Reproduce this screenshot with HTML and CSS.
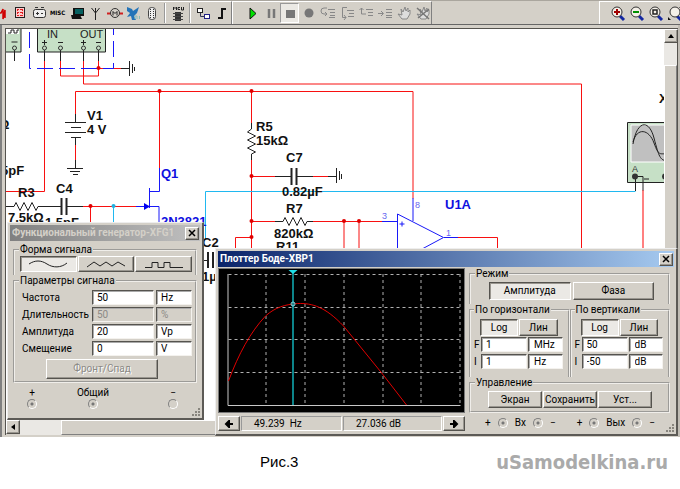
FILE: index.html
```html
<!DOCTYPE html>
<html lang="ru">
<head>
<meta charset="utf-8">
<title>Плоттер Боде</title>
<link rel="stylesheet" href="styles.css">
</head>
<body>
<main class="app">
  <header class="toolbar">
    <div class="band components">
      <button class="tool cut" aria-label="Аналоговые"><svg viewBox="0 0 10 18"><path d="M0 9h1l2-4v10l2-9v8" stroke="#d00000" stroke-width="1.5" fill="none"/></svg></button>
      <button class="tool" aria-label="Индикаторы"><svg viewBox="0 0 18 18"><rect x="4.500" y="3.500" width="9" height="10" fill="#fcc" stroke="#222"/><path d="M6 5.500h6M6 8.500h6M6 11.500h6M6.500 5v7M11.500 5v7" stroke="#e02020" stroke-dasharray="2 1"/></svg></button>
      <button class="tool" aria-label="Питание"><svg viewBox="0 0 18 18"><rect x="3.500" y="5.500" width="12" height="8" rx="2" fill="#eee" stroke="#333"/><path d="M5 3.500h3M11 3.500h3M6 9.500h3M7.500 8v3M11 9.500h2" stroke="#333"/></svg></button>
      <button class="tool misc" aria-label="Разное">MISC</button>
      <button class="tool" aria-label="Периферия"><svg viewBox="0 0 18 18"><rect x="5" y="4" width="11" height="8" fill="#111"/><rect x="7" y="5" width="8" height="5" fill="#066060"/><path d="M3 11h9l2 4H4z" fill="#111"/></svg></button>
      <button class="tool" aria-label="Радио"><svg viewBox="0 0 18 18"><path d="M4.500 4l4 5 4-5M8.500 4v12" stroke="#222" fill="none"/></svg></button>
      <button class="tool" aria-label="Электромеханика"><svg viewBox="0 0 18 18"><path d="M1 9.500h4M13 9.500h4" stroke="#d02020" stroke-width="2"/><circle cx="9" cy="9" r="4.500" fill="#d4d0c8" stroke="#333"/><path d="M7 11.500v-4l2 2 2-2v4" stroke="#222" fill="none"/></svg></button>
      <button class="tool" aria-label="NI"><svg viewBox="0 0 18 18"><path d="M2 3l5 2 1 2 6-4-2 6-3 3 2 4H7l-1-4-4 1 3-4-3-2z" fill="#2474b8"/><path d="M10 15v-3h2v3M14.500 12v3" stroke="#8bb" fill="none"/></svg></button>
      <button class="tool" aria-label="Разъёмы"><svg viewBox="0 0 18 18"><rect x="4.500" y="3.500" width="7" height="12" rx="3" fill="#eee" stroke="#444"/><path d="M6.500 5v9M9.500 5v9" stroke="#333" stroke-dasharray="1 1"/></svg></button>
      <span class="sep"></span>
      <button class="tool" aria-label="MCU"><svg viewBox="0 0 18 18"><path d="M4.500 6V3l1.500 1.500L7.500 3v3M11 3.500H9v2h2M12.500 3v3h2V3" stroke="#222" fill="none"/><rect x="6" y="8" width="6" height="9" fill="#333"/><path d="M4 9.500h10M4 12.500h10M4 15.500h10" stroke="#444"/></svg></button>
      <span class="sep"></span>
      <button class="tool" aria-label="Иерархический блок"><svg viewBox="0 0 18 18"><rect x="3.500" y="4.500" width="5" height="4" fill="#fff" stroke="#222"/><rect x="10.500" y="10.500" width="5" height="4" fill="#fff" stroke="#228"/><path d="M6.500 9v3.500h4" fill="none" stroke="#335"/></svg></button>
      <button class="tool" aria-label="Шина"><svg viewBox="0 0 18 18"><path d="M5 14h4V5h4" fill="none" stroke="#111" stroke-width="2"/></svg></button>
    </div>
    <div class="band simulate">
      <button class="tool" aria-label="Пуск"><svg viewBox="0 0 18 18"><path d="M7 4v11l6-5.500z" fill="#00e000" stroke="#111"/></svg></button>
      <button class="tool" aria-label="Пауза"><svg viewBox="0 0 18 18"><path d="M7 5v9M12 5v9" stroke="#777" stroke-width="2.500"/></svg></button>
      <button class="tool pressed" aria-label="Стоп"><svg viewBox="0 0 18 18"><rect x="5" y="6" width="9" height="8" fill="#777"/></svg></button>
      <button class="tool" aria-label="Запись"><svg viewBox="0 0 18 18"><circle cx="9" cy="9" r="4.500" fill="#777"/></svg></button>
      <button class="tool" aria-label="Шаг внутрь"><svg viewBox="0 0 18 18"><path d="M8 4H5a3 3 0 0 0 0 6h3M6 8l2 2-2 2M9 5.500h7M11 8.500h5M11 11.500h5M10 13.500h6" stroke="#888" fill="none"/></svg></button>
      <button class="tool" aria-label="Шаг через"><svg viewBox="0 0 18 18"><path d="M9 3.500H4.500v10H8M6 11l2 2.500L6 16M9 6.500h7M11 9.500h5M10 12.500h6" stroke="#888" fill="none"/></svg></button>
      <button class="tool" aria-label="Шаг наружу"><svg viewBox="0 0 18 18"><path d="M4.500 4v6H9M2.500 6l2-2 2 2M9 5.500h7M11 8.500h5M11 11.500h5" stroke="#888" fill="none"/></svg></button>
      <button class="tool" aria-label="До курсора"><svg viewBox="0 0 18 18"><path d="M2 9.500h5M5 7l2.500 2.500L5 12M10 5.500h6M10 8.500h6M10 11.500h6M10 13.500h6" stroke="#888" fill="none"/></svg></button>
      <button class="tool" aria-label="Точка останова"><svg viewBox="0 0 18 18"><path d="M3 10l4 5h5l3-5V6l-2 2V4l-2 3-1-4-2 5-2-3 1 6z" fill="#ddd" stroke="#888"/></svg></button>
      <button class="tool" aria-label="Снять точки"><svg viewBox="0 0 18 18"><path d="M3 10l4 5h5l3-5V6l-2 2V4l-2 3-1-4-2 5-2-3 1 6z" fill="#ddd" stroke="#888"/><path d="M3 4l12 11M15 5L4 14" stroke="#777" stroke-width="1.500"/></svg></button>
    </div>
    <div class="band zooming">
      <button class="tool" aria-label="Увеличить"><svg viewBox="0 0 18 18"><path d="M11 12l4 4" stroke="#1428a0" stroke-width="3"/><circle cx="8" cy="8" r="5" fill="#f4f0e8" stroke="#333"/><path d="M5 8h6M8 5v6" stroke="#a00000" stroke-width="2"/></svg></button>
      <button class="tool" aria-label="Уменьшить"><svg viewBox="0 0 18 18"><path d="M11 12l4 4" stroke="#1428a0" stroke-width="3"/><circle cx="8" cy="8" r="5" fill="#f4f0e8" stroke="#333"/><path d="M5 8h6" stroke="#009000" stroke-width="2"/></svg></button>
      <button class="tool" aria-label="Область"><svg viewBox="0 0 18 18"><path d="M11 12l4 4" stroke="#1428a0" stroke-width="3"/><circle cx="8" cy="8" r="5" fill="#f4f0e8" stroke="#333"/><rect x="6" y="6" width="4" height="4" fill="none" stroke="#222" stroke-width="1.500"/></svg></button>
      <button class="tool" aria-label="Весь лист"><svg viewBox="0 0 18 18"><path d="M11 12l4 4" stroke="#1428a0" stroke-width="3"/><circle cx="9" cy="8" r="5" fill="#f4f0e8" stroke="#333"/><path d="M2 13v3h3z" fill="#111"/><path d="M13 3h4v4z" fill="#111"/></svg></button>
    </div>
  </header>

  <section class="workspace">
    <div class="sheet">
      <svg class="schematic" width="658" height="392" viewBox="6 29 658 392" fill="none" role="img" aria-label="Схема">
        <g fill="#c6e0c6" stroke="#222">
          <path d="M5.500 20.500h15.500v31.500H5.500z"/>
          <path d="M37.500 20.500h68v31.500h-68z"/>
          <path d="M627.500 122.500h50v60h-50z"/>
        </g>
        <path d="M6 29h13v5H6z" fill="#fff"/>
        <path class="k" d="M8 33h3v-3h3v3h3v-3h2"/>
        <path d="M631 125h40v37h-40z" fill="#c0c0c0" stroke="#fff"/>
        <path class="k" d="M633 144C637 120 649 119 654 138S660 160 667 161M633 142C637 127 649 129 654 143S660 153 667 154"/>
        <g class="red">
          <path d="M44.500 61v130.500H6M60.500 61v15h38V61M98.500 68.500h23M83.500 61v23h498v164"/>
          <path d="M75.500 114V91.500h337.500v107M75.500 145v15M159.500 91v77M251.500 91v32M251.500 160v88M251 176.500h24M313 176.500h15M251 221.500h24M313 221.500h69M344 221v27M359 221v27M251 237.500h-15.500V248M458 237.500h39.500V248M83 206.500h53M90.500 206v18"/>
        </g>
        <path d="M643 190v58" stroke="#ff8080" stroke-width="2"/>
        <path class="cyan" d="M113.500 206v18M205.500 240v-48.500h430"/>
        <path class="blue dash" d="M29.500 32v36.500h84V29"/>
        <path class="blue" d="M159.500 168v23.500h-10M149.500 188v20M136 206.500h23V224M413 198v23M382 221.500h15M397.500 252v-38l46 23.500-28 15M444 237.500h14M399.500 224h5M402 221.500v5"/>
        <path d="M144 203l6 3.500-6 3.500z" fill="#0000f0"/>
        <g class="k">
          <path d="M14.500 50v11M44.500 50v11M60.500 50v11M83.500 50v11M98.500 50v11M11.500 42h6M42 42.500h5M44.500 40v5M58 42.500h5M81 42.500h5M83.500 40v5M96 42.500h5"/>
          <path d="M121 68.500h8M129.500 61v15M132.500 64v9M134.500 67v4"/>
          <path d="M75.500 114v8M65 122.500h21M71 127.500h10M65 132.500h21M71 137.500h10M75.500 137v8M75.500 160v8M67 168.500h16M70 171.500h10M73 174.500h5"/>
          <path d="M6 206.500h8l2-4 4 8 4-8 4 8 4-8 4 8 2-4h23M67 206.500h16"/>
          <path d="M251.500 123v6l-4 3 8 4-8 4 8 4-8 4 8 4-4 2v6"/>
          <path d="M275 176.500h16M297 176.500h16M328 176.500h8M336.500 168v15M339.500 171v9M341.500 174v5"/>
          <path d="M275 221.500h8l2-4 4 8 4-8 4 8 4-8 4 8 2-4h6"/>
          <path d="M635.500 176v15M637 176.500h6v14M649 179h-5M203 260.500h5"/>
        </g>
        <path d="M61.500 198v17M66.500 198v17M291.500 168v17M296.500 168v17M208 252v16M213 252v16" stroke="#222" stroke-width="2"/>
        <g fill="#c6e0c6" stroke="#333">
          <circle cx="14.500" cy="48" r="2"/><circle cx="44.500" cy="48" r="2"/><circle cx="60.500" cy="48" r="2"/><circle cx="83.500" cy="48" r="2"/><circle cx="98.500" cy="48" r="2"/>
        </g>
        <circle cx="635" cy="176.500" r="3" fill="#333"/><circle cx="665" cy="176.500" r="3" fill="#333"/>
        <g fill="#e00000">
          <circle cx="98.500" cy="68" r="2"/><circle cx="159.500" cy="91" r="2"/><circle cx="251.500" cy="91" r="2"/><circle cx="251.500" cy="176" r="2"/><circle cx="251.500" cy="221" r="2"/><circle cx="344" cy="221" r="2"/><circle cx="359" cy="221" r="2"/><circle cx="251.500" cy="237" r="2"/><circle cx="90.500" cy="206" r="2"/>
        </g>
        <circle cx="113.500" cy="206" r="2" fill="#20b0e0"/>
        <g class="port">
          <text x="47" y="38">IN</text><text x="80" y="38">OUT</text>
        </g>
        <g class="pin"><text x="382" y="219">3</text><text x="415" y="208">8</text><text x="446" y="236">1</text></g>
        <text class="pin dark" x="632" y="172">A</text>
        <g class="name">
          <text x="-1" y="129">Ω</text><text x="1" y="175">5pF</text>
          <text x="87" y="120">V1</text><text x="87" y="134">4 V</text>
          <text x="18" y="197">R3</text><text x="8" y="222">7.5kΩ</text>
          <text x="56" y="193">C4</text><text x="45" y="227">1.5pF</text>
          <text x="256" y="131">R5</text><text x="256" y="145">15kΩ</text>
          <text x="286" y="162">C7</text><text x="282" y="196">0.82µF</text>
          <text x="286" y="213">R7</text><text x="274" y="238">820kΩ</text><text x="276" y="251">R11</text>
          <text x="202" y="247">C2</text><text x="202" y="281">1µ</text><text x="659" y="103">X</text>
        </g>
        <g class="name ref"><text x="161" y="178">Q1</text><text x="161" y="226">2N3821</text><text x="445" y="209">U1A</text></g>
      </svg>
    </div>
    <div class="scroll vertical">
      <button class="btn arrow" aria-label="Вверх"><svg viewBox="0 0 8 8"><path d="M1 6h6L4 2z"/></svg></button>
      <div class="track"></div>
      <div class="thumb"></div>
    </div>
    <div class="scroll horizontal">
      <button class="btn arrow" aria-label="Влево"><svg viewBox="0 0 8 8"><path d="M6 1v6L2 4z"/></svg></button>
      <div class="track"></div>
      <div class="thumb"></div>
    </div>

    <section class="window generator">
      <div class="title idle"><h2>Функциональный генератор-XFG1</h2><button class="btn close" aria-label="Закрыть"><svg viewBox="0 0 8 8"><path d="M1 1l6 6M7 1L1 7"/></svg></button></div>
      <div class="gen-body">
        <fieldset class="group open">
          <legend>Форма сигнала</legend>
          <div class="waves">
            <button class="btn on" aria-label="Синус"><svg viewBox="0 0 40 10"><path d="M1 5c6-4 12-4 18 0s14 4 20-1"/></svg></button>
            <button class="btn" aria-label="Треугольник"><svg viewBox="0 0 40 10"><path d="M1 8l7-5 6 4 6-4 6 4 6-4 7 4"/></svg></button>
            <button class="btn" aria-label="Меандр"><svg viewBox="0 0 40 10"><path d="M1 8.500h7v-5h6v5h6v-5h6v5h13"/></svg></button>
          </div>
        </fieldset>
        <fieldset class="group">
          <legend>Параметры сигнала</legend>
          <div class="params">
            <label for="freq">Частота</label><input id="freq" value="50"><input aria-label="Единица частоты" value="Hz">
            <label for="duty">Длительность</label><input id="duty" value="50" disabled><input aria-label="Единица длительности" value="%" disabled>
            <label for="amp">Амплитуда</label><input id="amp" value="20"><input aria-label="Единица амплитуды" value="Vp">
            <label for="off">Смещение</label><input id="off" value="0"><input aria-label="Единица смещения" value="V">
          </div>
          <button class="btn edge" disabled>Фронт/Спад</button>
        </fieldset>
        <div class="outputs">
          <label>+<input type="radio" name="g1" checked></label>
          <label>Общий<input type="radio" name="g2" checked></label>
          <label>−<input type="radio" name="g3"></label>
        </div>
      </div>
      <svg class="grip" viewBox="0 0 10 10"><path d="M8 1v2M8 4v2M8 7v2M5 4v2M5 7v2M2 7v2" /></svg>
    </section>

    <section class="window plotter">
      <div class="title"><h2>Плоттер Боде-XBP1</h2><button class="btn close" aria-label="Закрыть"><svg viewBox="0 0 8 8"><path d="M1 1l6 6M7 1L1 7"/></svg></button></div>
      <div class="plot-body">
        <div class="plot-side">
          <svg class="plot" viewBox="219 268 244 143" role="img" aria-label="АЧХ">
            <path class="gridline" d="M228 273.500h232M228 306.500h232M228 338.500h232M228 371.500h232M265.500 273v131M304.500 273v131M343.500 273v131M382.500 273v131M420.500 273v131M459.500 273v131"/>
            <path d="M227.500 273v131.500H460" fill="none" stroke="#c8c8c8"/>
            <path d="M228 380C238 353 250 331 265 315C275 306 285 303.500 297 302.500C312 302 325 306 343 325L382 373L406 404" fill="none" stroke="#e00000"/>
            <path d="M292.500 269v135" stroke="#10b0b8" stroke-width="1.500"/>
            <path d="M288 269h9l-4.500 4z" fill="#20e0e8"/>
            <circle cx="292.500" cy="303" r="2" fill="none" stroke="#80e0e8"/>
          </svg>
          <div class="readout">
            <button class="btn" aria-label="Курсор влево"><svg viewBox="0 0 10 8"><path d="M9 4H3M5 1L2 4l3 3z"/></svg></button>
            <output>49.239&nbsp; Hz</output>
            <output>27.036 dB</output>
            <button class="btn" aria-label="Курсор вправо"><svg viewBox="0 0 10 8"><path d="M1 4h6M5 1l3 3-3 3z"/></svg></button>
          </div>
        </div>
        <div class="controls">
          <fieldset class="group open mode">
            <legend>Режим</legend>
            <div class="pair"><button class="btn on">Амплитуда</button><button class="btn">Фаза</button></div>
          </fieldset>
          <div class="axes">
            <fieldset class="group open axis">
              <legend>По горизонтали</legend>
              <div class="scale"><button class="btn on">Log</button><button class="btn">Лин</button></div>
              <div class="range">
                <label for="hf">F</label><input id="hf" value="1"><input class="unit" aria-label="Единица F" value="MHz">
                <label for="hi">I</label><input id="hi" value="1"><input class="unit" aria-label="Единица I" value="Hz">
              </div>
            </fieldset>
            <fieldset class="group open axis">
              <legend>По вертикали</legend>
              <div class="scale"><button class="btn on">Log</button><button class="btn">Лин</button></div>
              <div class="range">
                <label for="vf">F</label><input id="vf" value="50"><input class="unit" aria-label="Единица F" value="dB">
                <label for="vi">I</label><input id="vi" value="-50"><input class="unit" aria-label="Единица I" value="dB">
              </div>
            </fieldset>
          </div>
          <fieldset class="group manage">
            <legend>Управление</legend>
            <div class="trio"><button class="btn">Экран</button><button class="btn">Сохранить</button><button class="btn">Уст...</button></div>
          </fieldset>
          <div class="jacks">
            <div class="jack"><span>+</span><input type="radio" name="j1" aria-label="Вх +" checked><span>Вх</span><input type="radio" name="j2" aria-label="Вх −" checked><span>−</span></div>
            <div class="jack"><span>+</span><input type="radio" name="j3" aria-label="Вых +" checked><span>Вых</span><input type="radio" name="j4" aria-label="Вых −" checked><span>−</span></div>
          </div>
        </div>
      </div>
      <svg class="grip" viewBox="0 0 10 10"><path d="M8 1v2M8 4v2M8 7v2M5 4v2M5 7v2M2 7v2" /></svg>
    </section>
  </section>

  <footer class="caption">
    <p class="figure-no">Рис.3</p>
    <p class="mark">uSamodelkina.ru</p>
  </footer>
</main>
</body>
</html>
```
FILE: styles.css
```css
:root {
  --face: #d4d0c8;
  --dark: #55534e;
  --mid: #808080;
  --ui: Roboto, "Liberation Sans", sans-serif;
}

* { box-sizing: border-box; }

body {
  margin: 0;
  background: #fff;
  color: #000;
  font: 10px/12px var(--ui);
  overflow: hidden;
}

button, input { font: inherit; color: inherit; margin: 0; padding: 0; border-radius: 0; min-width: 0; }

/* Toolbar */
.toolbar {
  display: flex;
  height: 25px;
  background: var(--face);
  border-top: 1px solid #aaa69e;
  border-bottom: 1px solid #666;
}
.band {
  display: flex;
  align-items: center;
  border-top: 1px solid #fff;
  border-right: 1px solid var(--mid);
  overflow: hidden;
}
.components { width: 232px; }
.simulate { width: 200px; padding-left: 9px; border-left: 1px solid #fff; }
.zooming { margin-left: auto; width: 81px; padding-left: 8px; border-left: 1px solid #fff; border-right: 0; }
.tool {
  flex: none;
  width: 19px;
  height: 20px;
  border: 0;
  background: none;
  display: grid;
  place-items: center;
}
.tool svg { width: 18px; height: 18px; display: block; }
.tool.cut { width: 10px; }
.tool.cut svg { width: 10px; }
.tool.misc { font: bold 6px/8px "DejaVu Sans Condensed", sans-serif; }
.tool.pressed { background: #ebe9e4; border: 1px solid #999; border-right-color: #fff; border-bottom-color: #fff; }
.sep { flex: none; width: 2px; height: 20px; margin: 0 2px; border-left: 1px solid #999; border-right: 1px solid #fff; }

/* Sheet frame */
.workspace {
  position: relative;
  display: grid;
  grid-template: 392px 15px / 1fr 14px;
  background: var(--face);
  border-left: 2px solid var(--mid);
  border-right: 2px solid #c0bcb4;
  padding: 3px 0 2px 3px;
}
.sheet { background: #fff; border-left: 1px solid var(--dark); border-top: 1px solid var(--dark); overflow: hidden; }
.schematic { display: block; }
.red { stroke: #f81010; }
.cyan { stroke: #20b8f0; }
.blue { stroke: #1818f8; }
.dash { stroke-dasharray: 16 6; }
.k { stroke: #222; }
.name text { font: bold 13px "Liberation Sans", sans-serif; fill: #111; }
.ref text { fill: #1010e0; }
.port text { font: 11px "Liberation Sans", sans-serif; fill: #222; }
.pin { font: 9px "Liberation Sans", sans-serif; fill: #6868f0; }
.dark { fill: #333; }

.scroll { display: flex; background: var(--face); }
.vertical { flex-direction: column; border-top: 1px solid var(--dark); border-right: 1px solid var(--dark); }
.horizontal { border-left: 1px solid var(--dark); grid-column: 1 / -1; }
.track { background: #eae8e4; }
.vertical .track { height: 22px; }
.horizontal .track { width: 41px; }
.thumb { flex: 1; border: 1px solid #fff; border-right-color: var(--mid); border-bottom-color: var(--mid); }
.arrow { flex: none; width: 14px; height: 14px; }
.arrow svg { width: 8px; height: 8px; fill: #000; }

/* Classic controls */
.btn {
  display: grid;
  place-items: center;
  background: var(--face);
  border: 1px solid #fff;
  border-right-color: var(--dark);
  border-bottom-color: var(--dark);
  box-shadow: inset -1px -1px #99968f;
  white-space: nowrap;
}
.btn.on {
  background: #ebe9e5;
  border-color: var(--dark) #fff #fff var(--dark);
  box-shadow: inset 1px 1px #99968f;
}
.btn:disabled { color: #8c8a86; text-shadow: 1px 1px #fff; }
input:not([type="radio"]) {
  width: 100%;
  height: 15px;
  padding-left: 4px;
  background: #fff;
  border: 1px solid #f4f2ee;
  border-top-color: var(--dark);
  border-left-color: var(--dark);
  box-shadow: inset 1px 1px #aaa;
  outline: 0;
}
input:disabled { background: var(--face) !important; color: #8c8a86; }
input[type="radio"] {
  appearance: none;
  width: 10px;
  height: 10px;
  border: 1px solid #fff;
  border-top-color: var(--mid);
  border-left-color: var(--mid);
  border-radius: 50%;
}
input[type="radio"]:checked { background: radial-gradient(circle, #777 0 1px, #d4d0c8 2px); }

/* Instrument windows */
.window {
  position: absolute;
  background: var(--face);
  border: 1px solid #eee;
  border-right: 2px solid #5c5a56;
  border-bottom: 2px solid #5c5a56;
  padding: 2px;
}
.generator { left: 5px; top: 197px; width: 197px; height: 198px; }
.plotter { left: 213px; top: 223px; right: 0; height: 188px; }
.title {
  display: flex;
  align-items: center;
  justify-content: space-between;
  height: 16px;
  padding: 0 1px 0 2px;
  color: #fff;
  background: linear-gradient(90deg, #0a246a, #a6caf0);
}
.title.idle { background: linear-gradient(90deg, #808080, #c0c0c0); color: var(--face); }
.title h2 { margin: 0; font: bold 10px/14px var(--ui); white-space: nowrap; }
.close { flex: none; width: 14px; height: 13px; }
.close svg { width: 8px; height: 8px; stroke: #000; stroke-width: 1.5; }
.grip { position: absolute; right: 1px; bottom: 1px; width: 10px; height: 10px; stroke: #88857e; stroke-width: 2; }

.group { margin: 0; min-width: 0; border: 2px groove #f0eeea; padding: 0; }
.group.open { border-bottom: 0; }
.group legend { margin-left: 4px; padding: 0 1px; line-height: 12px; }

.gen-body { padding: 3px 3px 0; }
.generator .group { padding: 0 3px 2px 5px; }
.generator .group legend { margin-left: -1px; }
.waves { display: grid; grid-template-columns: repeat(3, 1fr); gap: 1px; padding-bottom: 1px; }
.waves .btn { height: 16px; }
.waves svg { width: 40px; height: 10px; fill: none; stroke: #222; }
.params { display: grid; grid-template-columns: 68px 62px 1fr; gap: 2px; align-items: center; padding: 3px 0 3px 2px; }
.edge { width: 112px; height: 20px; margin-left: 26px; }
.outputs { display: grid; grid-template-columns: 38px 84px 56px; padding-top: 4px; }
.outputs label { display: grid; justify-items: center; }
.outputs label:last-child { padding-left: 20px; }

.plot-body { display: flex; gap: 4px; padding-top: 1px; }
.plot-side { flex: 0 0 247px; }
.plot { display: block; width: 100%; height: 145px; background: #000; border: 1px solid #777; }
.gridline { fill: none; stroke: #b0b0b0; stroke-dasharray: 3 3; }
.readout { display: grid; grid-template-columns: 22px 101px 1fr 22px; gap: 1px; margin-top: 3px; }
.readout .btn, .readout output { height: 15px; }
.readout svg { width: 10px; height: 8px; stroke: #000; stroke-width: 2; }
.readout output { padding-left: 12px; line-height: 14px; border: 1px solid #fff; border-top-color: #999; border-left-color: #999; }

.controls { flex: 1; padding-right: 4px; }
.controls .group { height: 36px; }
.pair { display: grid; grid-template-columns: 1fr 1fr; gap: 2px; padding: 2px 14px 0 18px; }
.pair .btn { height: 18px; }
.axes { display: grid; grid-template-columns: 1fr 1fr; }
.controls .axis { height: 73px; padding: 3px 5px 0 3px; }
.axis legend { margin-left: 0; }
.scale { display: grid; grid-template-columns: 1fr 1fr; gap: 1px; padding: 0 5px 0 6px; margin-bottom: 1px; }
.scale .btn { height: 17px; }
.range { display: grid; grid-template-columns: 6px 46px 1fr; gap: 2px 1px; align-items: center; }
.range .unit { padding-left: 5px; }
.trio { display: grid; grid-template-columns: repeat(3, 1fr); gap: 1px; padding: 2px 16px 0 17px; }
.trio .btn { height: 17px; }
.jacks { display: flex; justify-content: space-between; padding: 4px 15px 0 16px; }
.jack { display: flex; gap: 7px; align-items: center; }

/* Caption */
.caption { display: flex; justify-content: space-between; align-items: center; height: 50px; padding: 0 12px 0 260px; }
.caption p { margin: 0; }
.figure-no { font: 15px/18px "Liberation Sans", sans-serif; }
.mark { font: bold 20px/24px "DejaVu Sans Condensed", sans-serif; color: #aaa; }
```
